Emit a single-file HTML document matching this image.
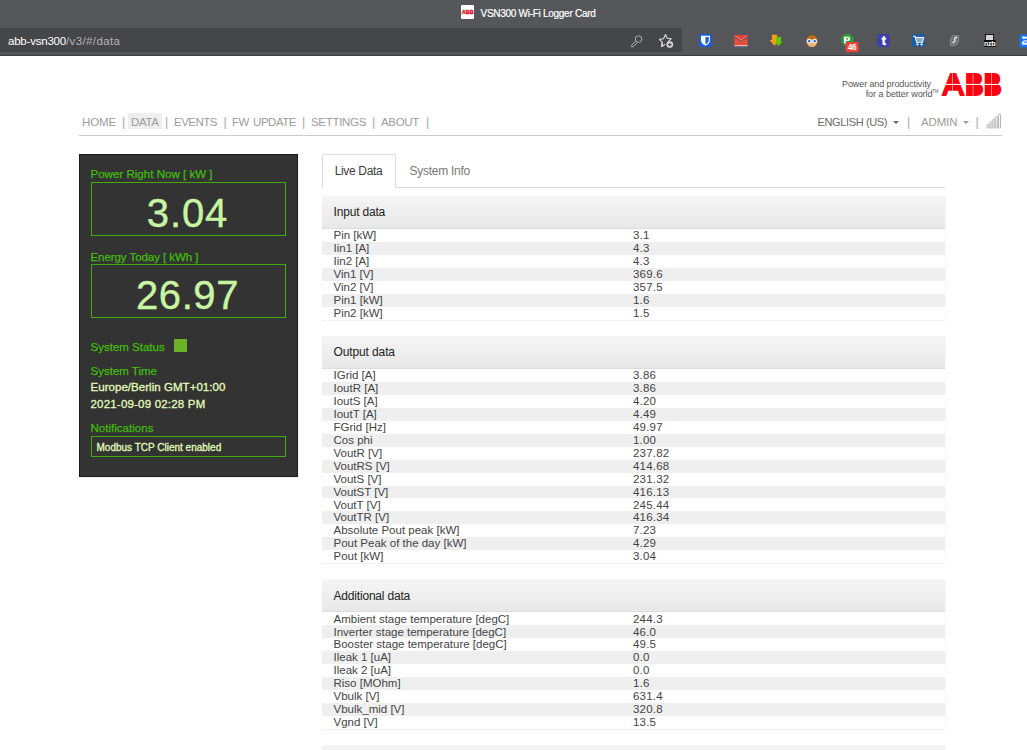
<!DOCTYPE html>
<html><head><meta charset="utf-8"><title>VSN300 Wi-Fi Logger Card</title>
<style>
*{box-sizing:border-box;margin:0;padding:0}
html,body{width:1027px;height:750px;overflow:hidden;background:#fff;font-family:"Liberation Sans",sans-serif;}
.abs{position:absolute;white-space:nowrap;}
#titlebar{position:absolute;left:0;top:0;width:1027px;height:28px;background:#55565a;}
#title{left:480.5px;top:7px;font-size:10px;line-height:14px;color:#fff;-webkit-text-stroke:0.2px #fff;}
#fav{position:absolute;left:461px;top:5px;width:13px;height:14px;background:#fff;border-radius:1px;}
#fav span{position:absolute;left:0.8px;top:4px;font-size:5.6px;font-weight:bold;color:#e2001a;line-height:6px;-webkit-text-stroke:0.3px #e2001a;letter-spacing:-0.1px}
#urlbar{position:absolute;left:0;top:28px;width:1027px;height:28px;background:#55565a;border-bottom:1px solid #3c3d40;}
#urlbar .field{position:absolute;left:0;top:0;width:682px;height:23.5px;background:#454649;border-radius:0 3px 3px 0;}
#url{left:8px;top:5.6px;font-size:11.5px;line-height:14px;color:#fff;}
#url i{font-style:normal;color:#b4b4b7;}
/* nav */
.nav{font-size:11.5px;line-height:14px;color:#9c9c9c;top:114.8px;}
.sep{font-size:12.5px;line-height:14px;color:#a8a8a8;top:114.6px;}
#datahl{position:absolute;left:128px;top:113px;width:34px;height:16px;background:#eee;}
#navline{position:absolute;left:79px;top:135px;width:923px;height:1px;background:#ccc;}
.tag{font-size:9px;line-height:10px;color:#555;text-align:right;}

#side{box-shadow:0 1px 2px rgba(0,0,0,0.08);position:absolute;left:79px;top:154px;width:219px;height:323px;background:#333;border:1px solid #1c1c1c;}
#side .lab{font-size:11.5px;line-height:14px;color:#41bd0a;-webkit-text-stroke:0.25px #41bd0a;}
#side .val{font-size:11.5px;line-height:14px;color:#e3fcba;-webkit-text-stroke:0.3px #e3fcba;}
#side .box{position:absolute;left:11px;width:195px;border:1px solid #43aa10;}
#b2{letter-spacing:0.6px !important}
#side .big{position:absolute;left:-1px;right:1px;top:10px;text-align:center;font-size:40px;line-height:40px;color:#c9f5a3;letter-spacing:0.9px;-webkit-text-stroke:0.4px #c9f5a3;}

#tabline{position:absolute;left:322px;top:186.6px;width:623px;height:1px;background:#ddd;}
#tab1{position:absolute;left:322px;top:153.6px;width:74px;height:34px;border:1px solid #ddd;border-bottom:1px solid #fff;border-radius:2.5px 2.5px 0 0;background:#fff;}
#tab1 span{position:absolute;left:11.7px;top:9.7px;font-size:12px;line-height:14px;color:#3c3c3c;white-space:nowrap;}
.panel{position:absolute;left:322px;width:623px;box-shadow:0 1px 0 #f0f0f0,1px 0 0 #f7f7f7;}
.ph{height:33.2px;background:linear-gradient(#f5f5f5,#e8e8e8);border-bottom:1px solid #ddd;position:relative;}
.ph span{position:absolute;left:11.5px;top:9.2px;font-size:12px;line-height:14px;color:#222;white-space:nowrap;}
.row{height:12.95px;position:relative;font-size:11.5px;line-height:13px;color:#444;background:#fff;}
.row.g{background:#efefef;}
.row .k{position:absolute;left:11.5px;top:0.1px;white-space:nowrap;}
.row .v{position:absolute;left:311px;top:0.1px;white-space:nowrap;letter-spacing:0.2px;}
/*LS*/#title{letter-spacing:-0.280px}#n1{letter-spacing:-0.125px}#n2{letter-spacing:-0.367px}#n3{letter-spacing:-0.503px}#n4{letter-spacing:-0.486px}#n5{letter-spacing:-0.314px}#n6{letter-spacing:-0.325px}#n7{letter-spacing:-0.364px}#n8{letter-spacing:-0.153px}#tg1{letter-spacing:-0.093px}#tg2{letter-spacing:-0.038px}#s1{letter-spacing:0.026px}#s2{letter-spacing:-0.065px}#s3{letter-spacing:0.005px}#s4{letter-spacing:0.003px}#s5{letter-spacing:0.042px}#s6{letter-spacing:0.197px}#s7{letter-spacing:0.020px}#s8{letter-spacing:0.000px}#t1{letter-spacing:-0.334px}#t2{letter-spacing:-0.269px}#p1h{letter-spacing:-0.179px}#p2h{letter-spacing:-0.120px}#p3h{letter-spacing:-0.187px}#u1{letter-spacing:-0.211px}#u2{letter-spacing:0.378px}/*ELS*/
</style></head><body>
<div id="titlebar"><div id="fav"><span>ABB</span></div><div id="title" class="abs">VSN300 Wi-Fi Logger Card</div></div>
<div id="urlbar"><div class="field"></div><div id="url" class="abs"><span id="u1">abb-vsn300</span><i id="u2">/v3/#/data</i></div>

<svg class="abs" style="left:629px;top:6px" width="16" height="14" viewBox="0 0 16 14"><g fill="none" stroke="#b1b1b3" stroke-width="1" stroke-linejoin="round"><circle cx="9.6" cy="5.1" r="3.3"/><path d="M6.9 6.9 L2.6 11.2 V12.7 H4.3 L8.0 9.0 " /></g></svg>
<svg class="abs" style="left:658px;top:5px" width="18" height="16" viewBox="0 0 18 16"><path d="M7.5 1.6 L9.2 5.3 L13.2 5.8 L10.4 8.4 M5.0 12.6 L3.6 13.4 L4.3 9.3 L1.4 6.4 L5.5 5.8 L7.5 1.6" fill="none" stroke="#dcdcde" stroke-width="1.1" stroke-linejoin="round" stroke-linecap="round"/><path d="M4.3 9.3 L3.6 13.4 L7.0 11.5" fill="none" stroke="#dcdcde" stroke-width="1.1" stroke-linejoin="round" stroke-linecap="round"/><circle cx="11.8" cy="11.6" r="3.3" fill="#dcdcde"/><path d="M11.8 9.8 V13.4 M10 11.6 H13.6" stroke="#454649" stroke-width="1.1"/></svg>
<svg class="abs" style="left:698.5px;top:5.7px" width="14" height="14" viewBox="0 0 14 14"><rect x="0" y="0" width="13" height="13" rx="1.8" fill="#175ddc"/><path d="M2 1.8 H11 V6.6 C11 9.2 8.6 10.9 6.5 11.8 C4.4 10.9 2 9.2 2 6.6 Z" fill="#fff"/><path d="M6.5 3 H9.8 V6.6 C9.8 8.4 8 9.7 6.5 10.4 Z" fill="#175ddc"/></svg>
<svg class="abs" style="left:733.5px;top:6px" width="14" height="14" viewBox="0 0 14 14"><rect x="0.4" y="0.4" width="13.2" height="0.6" fill="#4a5670" opacity="0.7"/><rect x="0.4" y="1" width="13.2" height="10" fill="#ee3f34"/><rect x="0.4" y="6" width="13.2" height="3.8" fill="#de5040"/><rect x="0.4" y="10.9" width="13.2" height="1.1" fill="#f2b39c"/><rect x="0.4" y="12" width="13.2" height="1.1" fill="#5f7390"/><path d="M1.2 2.0 L7 6.2 L12.8 2.0" fill="none" stroke="#f1d7cc" stroke-width="0.7"/><path d="M1.2 2.8 L7 7.0 L12.8 2.8" fill="none" stroke="#47506c" stroke-width="0.9"/></svg>
<svg class="abs" style="left:769px;top:6px" width="15" height="14" viewBox="0 0 15 14"><path d="M2.9 0.8 H8.2 V6 H10.4 L5.5 11.7 L0.6 6 H2.9 Z" fill="#ff9a0a"/><path d="M7.1 3.1 H12.1 V7.9 H13.5 L9.4 12.1 L6 8.1 H7.1 Z" fill="#5cc800"/></svg>
<svg class="abs" style="left:806px;top:6.5px" width="13" height="13" viewBox="0 0 13 13"><path d="M0.6 9.5 C-0.6 3.5 2.2 0.2 5.9 0.2 C9.6 0.2 12.4 3.5 11.2 9.5 Z" fill="#c46d12"/><ellipse cx="5.9" cy="8.2" rx="4.3" ry="3.7" fill="#f6b66c"/><path d="M1.2 5 C3 2.4 8.8 2.4 10.6 5 L10.6 3.4 C8.8 0.6 3 0.6 1.2 3.4 Z" fill="#c46d12"/><rect x="4.6" y="5.6" width="2.6" height="1.2" fill="#cfe3f7"/><circle cx="3.1" cy="6.2" r="2.35" fill="#e4f3ff"/><circle cx="8.8" cy="6.2" r="2.35" fill="#e4f3ff"/><circle cx="3.2" cy="6.2" r="1.15" fill="#0b4fe6"/><circle cx="8.7" cy="6.2" r="1.15" fill="#0b4fe6"/><ellipse cx="5.9" cy="10" rx="0.9" ry="0.35" fill="#d98670"/></svg>
<svg class="abs" style="left:840px;top:5px" width="20" height="20" viewBox="0 0 20 20"><circle cx="7.4" cy="7" r="6.3" fill="#2f9e3c"/><path d="M4 3.8 H8.4 C10.6 3.8 10.8 8 8.4 8 H6 V10.6 H4 Z" fill="#fff"/><rect x="6.2" y="5" width="2" height="1.6" fill="#2f9e3c"/><rect x="5.6" y="9.1" width="13" height="9.8" rx="1.2" fill="#ee4236"/><text x="12.1" y="17.1" font-family="Liberation Sans, sans-serif" font-weight="bold" font-size="8.4" fill="#fff" text-anchor="middle" letter-spacing="-0.2">46</text></svg>
<svg class="abs" style="left:876.5px;top:6px" width="14" height="14" viewBox="0 0 14 14"><rect x="0.2" y="0" width="12.8" height="13" rx="2.4" fill="#3c40a8"/><text x="6.9" y="10.9" font-family="Liberation Sans, sans-serif" font-weight="bold" font-size="12.5" fill="#fff" stroke="#fff" stroke-width="0.5" text-anchor="middle">t</text></svg>
<svg class="abs" style="left:912px;top:6px" width="13" height="13" viewBox="0 0 13 13"><rect x="0" y="0" width="12.8" height="12.6" fill="#1c5ea6"/><path d="M1 2.2 H3 L4.6 8.2 H10.4 L11.6 3.6 H3.6" fill="none" stroke="#fff" stroke-width="1.1"/><path d="M4.2 5.2 H11 M4.6 6.8 H10.6 M6 3.6 V8 M8 3.6 V8 M9.8 3.6 V8" stroke="#cfe0f2" stroke-width="0.6"/><circle cx="5.4" cy="10.4" r="1.1" fill="#fff"/><circle cx="9.6" cy="10.4" r="1.1" fill="#fff"/></svg>
<svg class="abs" style="left:949px;top:7px" width="12" height="12" viewBox="0 0 12 12"><path d="M4.2 0.5 Q9.9 -0.2 9.9 1.2 L9.6 7 Q7.6 10.2 5.4 10.8 L1.6 10.6 Q1 10.4 1.2 9.4 L1.7 4 Q2.4 1.6 4.2 0.5 Z" fill="#737477" stroke="#949597" stroke-width="0.7"/><path d="M7.7 2.5 C5.9 2.3 5.2 3.6 5.7 4.6 C6.3 5.7 6.1 7.1 3.9 7.5" fill="none" stroke="#ededed" stroke-width="1.3" stroke-linecap="round"/></svg>
<svg class="abs" style="left:983px;top:6px" width="14" height="14" viewBox="0 0 14 14"><rect x="2.4" y="0.5" width="8.2" height="6" fill="#d6d6d6" stroke="#0c0c0c" stroke-width="0.9"/><path d="M0.2 6 H13 L12.4 7 V13 H1 V7 Z" fill="#0f0f0f"/><text x="6.7" y="11.9" font-family="Liberation Sans, sans-serif" font-weight="bold" font-size="7" fill="#fff" text-anchor="middle" letter-spacing="-0.3">nzb</text></svg>
<svg class="abs" style="left:1018.5px;top:5.5px" width="9" height="14" viewBox="0 0 9 14"><rect x="0.4" y="0.5" width="12" height="13" rx="1.8" fill="#1773f5"/><path d="M3 3.2 C3 2.2 5 2.6 6 2.8 H9 V4.6 H6 C5 5.4 3 4.4 3 3.2 Z" fill="#fff"/><path d="M3 8.2 C3.4 6 8 6.2 9 6.2 V10.8 H3.4 C2.6 10 2.6 9 3 8.2 Z" fill="#e9f1ff"/><rect x="5" y="7.6" width="4" height="1" fill="#1773f5"/></svg>

</div>

<div id="datahl"></div>
<div class="abs nav" id="n1" style="left:82px">HOME</div><div class="abs sep" style="left:122px">|</div>
<div class="abs nav" id="n2" style="left:131px">DATA</div><div class="abs sep" style="left:165px">|</div>
<div class="abs nav" id="n3" style="left:174px">EVENTS</div><div class="abs sep" style="left:223.5px">|</div>
<div class="abs nav" id="n4" style="left:232px;word-spacing:1.5px">FW UPDATE</div><div class="abs sep" style="left:302px">|</div>
<div class="abs nav" id="n5" style="left:311px">SETTINGS</div><div class="abs sep" style="left:372px">|</div>
<div class="abs nav" id="n6" style="left:381px">ABOUT</div><div class="abs sep" style="left:426px">|</div>
<div class="abs nav" id="n7" style="left:817.5px;color:#6a6a6a;font-size:11px;top:115.2px">ENGLISH (US)</div>
<div class="abs" style="left:893px;top:120.5px;width:0;height:0;border-left:3.5px solid transparent;border-right:3.5px solid transparent;border-top:3.5px solid #666"></div>
<div class="abs sep" style="left:907px">|</div>
<div class="abs nav" id="n8" style="left:921px">ADMIN</div>
<div class="abs" style="left:962.5px;top:120.5px;width:0;height:0;border-left:3.5px solid transparent;border-right:3.5px solid transparent;border-top:3.5px solid #999"></div>
<div class="abs sep" style="left:975.5px">|</div>
<svg class="abs" style="left:986px;top:112px" width="17" height="18" viewBox="0 0 17 18"><g fill="#fff" stroke="#adadad" stroke-width="0.9"><rect x="1.20" y="12.2" width="1.9" height="4.0" rx="0.7"/><rect x="4.05" y="9.7" width="1.9" height="6.5" rx="0.7"/><rect x="6.90" y="7.1" width="1.9" height="9.1" rx="0.7"/><rect x="9.75" y="4.6" width="1.9" height="11.6" rx="0.7"/><rect x="12.60" y="1.9" width="1.9" height="14.3" rx="0.7"/></g></svg>
<div id="navline"></div>
<div class="abs tag" id="tg1" style="right:96px;top:78.6px">Power and productivity</div>
<div class="abs tag" id="tg2" style="right:94.5px;top:89px">for a better world</div><div class="abs" style="left:931.9px;top:89.3px;font-size:4.5px;line-height:6px;color:#666;letter-spacing:0.2px">TM</div>
<svg class="abs" id="abblogo" style="left:940px;top:72px" width="63" height="26" viewBox="0 0 63 26">
<g fill="#ff000f"><polygon points="10.2,3 15.8,3 20.6,18.7 5.4,18.7"/><rect x="27.5" y="2.5" width="12.6" height="20"/><rect x="46.3" y="2.5" width="12.2" height="20"/></g>
<g font-family="Liberation Sans, sans-serif" font-weight="bold" font-size="33.8" fill="#ff000f">
<text transform="translate(0.42,24.2) scale(1.04,1)">A</text>
<text transform="translate(24.14,24.2) scale(0.827,1)">B</text>
<text transform="translate(43.1,24.2) scale(0.798,1)">B</text>
</g>
<g fill="#fff"><rect x="0" y="11.9" width="63" height="1"/><g opacity="0.75"><rect x="12.1" y="0" width="0.7" height="26"/><rect x="32.7" y="0" width="0.7" height="26"/><rect x="51.2" y="0" width="0.7" height="26"/></g></g>
</svg>


<div id="side">
<div class="abs lab" id="s1" style="left:10.5px;top:12px">Power Right Now [ kW ]</div>
<div class="box" style="top:27px;height:54px"><div class="big" id="b1">3.04</div></div>
<div class="abs lab" id="s2" style="left:10.5px;top:95px">Energy Today [ kWh ]</div>
<div class="box" style="top:109px;height:54px"><div class="big" id="b2">26.97</div></div>
<div class="abs lab" id="s3" style="left:10.5px;top:185.2px">System Status</div>
<div class="abs" style="left:94px;top:184px;width:13px;height:13px;background:#6bb324"></div>
<div class="abs lab" id="s4" style="left:10.5px;top:209.4px">System Time</div>
<div class="abs val" id="s5" style="left:10.5px;top:225.4px">Europe/Berlin GMT+01:00</div>
<div class="abs val" id="s6" style="left:10.5px;top:241.6px">2021-09-09 02:28 PM</div>
<div class="abs lab" id="s7" style="left:10.5px;top:265.6px">Notifications</div>
<div class="box" style="top:281px;height:21px"><div class="abs val" id="s8" style="left:4.5px;top:4.7px;font-size:10px;line-height:12px">Modbus TCP Client enabled</div></div>
</div>


<div id="tabline"></div>
<div id="tab1"><span id="t1">Live Data</span></div>
<div class="abs" id="t2" style="left:409.5px;top:164.4px;font-size:12px;line-height:14px;color:#777">System Info</div>
<div class="panel" style="top:196px"><div class="ph"><span id="p1h">Input data</span></div><div class="row"><span class="k" id="p1k0">Pin [kW]</span><span class="v">3.1</span></div><div class="row g"><span class="k" id="p1k1">Iin1 [A]</span><span class="v">4.3</span></div><div class="row"><span class="k" id="p1k2">Iin2 [A]</span><span class="v">4.3</span></div><div class="row g"><span class="k" id="p1k3">Vin1 [V]</span><span class="v">369.6</span></div><div class="row"><span class="k" id="p1k4">Vin2 [V]</span><span class="v">357.5</span></div><div class="row g"><span class="k" id="p1k5">Pin1 [kW]</span><span class="v">1.6</span></div><div class="row"><span class="k" id="p1k6">Pin2 [kW]</span><span class="v">1.5</span></div></div>
<div class="panel" style="top:335.9px"><div class="ph"><span id="p2h">Output data</span></div><div class="row"><span class="k" id="p2k0">IGrid [A]</span><span class="v">3.86</span></div><div class="row g"><span class="k" id="p2k1">IoutR [A]</span><span class="v">3.86</span></div><div class="row"><span class="k" id="p2k2">IoutS [A]</span><span class="v">4.20</span></div><div class="row g"><span class="k" id="p2k3">IoutT [A]</span><span class="v">4.49</span></div><div class="row"><span class="k" id="p2k4">FGrid [Hz]</span><span class="v">49.97</span></div><div class="row g"><span class="k" id="p2k5">Cos phi</span><span class="v">1.00</span></div><div class="row"><span class="k" id="p2k6">VoutR [V]</span><span class="v">237.82</span></div><div class="row g"><span class="k" id="p2k7">VoutRS [V]</span><span class="v">414.68</span></div><div class="row"><span class="k" id="p2k8">VoutS [V]</span><span class="v">231.32</span></div><div class="row g"><span class="k" id="p2k9">VoutST [V]</span><span class="v">416.13</span></div><div class="row"><span class="k" id="p2k10">VoutT [V]</span><span class="v">245.44</span></div><div class="row g"><span class="k" id="p2k11">VoutTR [V]</span><span class="v">416.34</span></div><div class="row"><span class="k" id="p2k12">Absolute Pout peak [kW]</span><span class="v">7.23</span></div><div class="row g"><span class="k" id="p2k13">Pout Peak of the day [kW]</span><span class="v">4.29</span></div><div class="row"><span class="k" id="p2k14">Pout [kW]</span><span class="v">3.04</span></div></div>
<div class="panel" style="top:579.3px"><div class="ph"><span id="p3h" style="top:9.8px">Additional data</span></div><div class="row"><span class="k" id="p3k0">Ambient stage temperature [degC]</span><span class="v">244.3</span></div><div class="row g"><span class="k" id="p3k1">Inverter stage temperature [degC]</span><span class="v">46.0</span></div><div class="row"><span class="k" id="p3k2">Booster stage temperature [degC]</span><span class="v">49.5</span></div><div class="row g"><span class="k" id="p3k3">Ileak 1 [uA]</span><span class="v">0.0</span></div><div class="row"><span class="k" id="p3k4">Ileak 2 [uA]</span><span class="v">0.0</span></div><div class="row g"><span class="k" id="p3k5">Riso [MOhm]</span><span class="v">1.6</span></div><div class="row"><span class="k" id="p3k6">Vbulk [V]</span><span class="v">631.4</span></div><div class="row g"><span class="k" id="p3k7">Vbulk_mid [V]</span><span class="v">320.8</span></div><div class="row"><span class="k" id="p3k8">Vgnd [V]</span><span class="v">13.5</span></div></div>
<div class="panel" style="top:745.4px"><div class="ph"></div></div>

</body></html>
